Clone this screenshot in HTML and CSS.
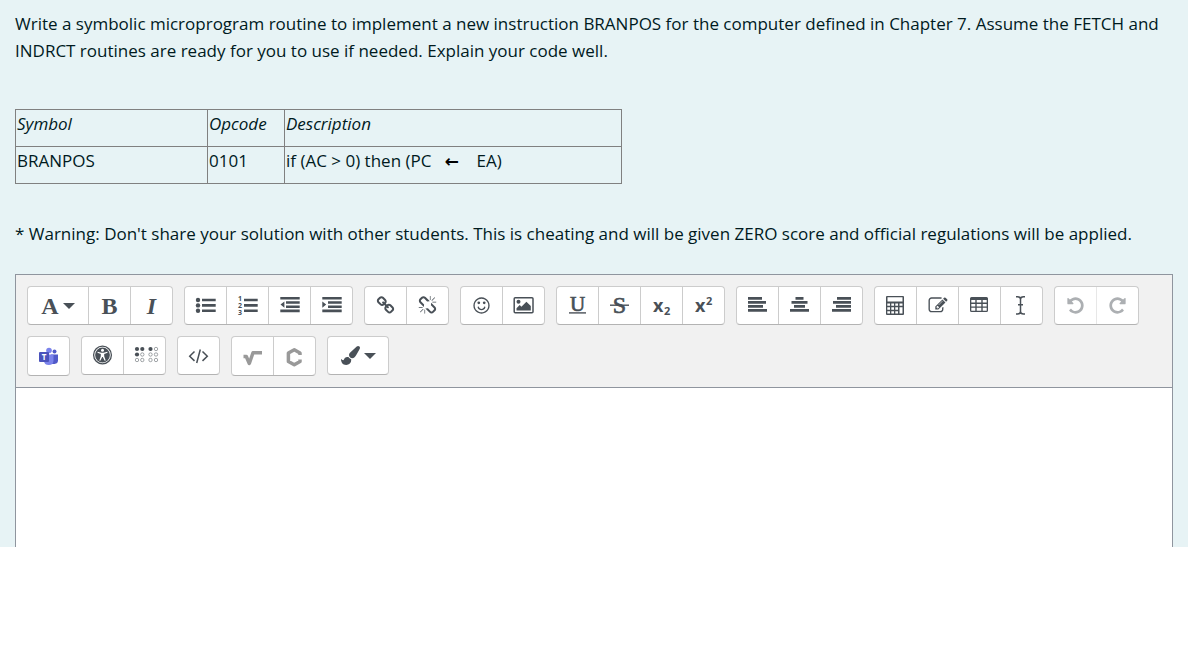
FILE: index.html
```html
<!DOCTYPE html>
<html lang="en">
<head>
    <meta charset="utf-8">
    <meta name="viewport" content="width=device-width, initial-scale=1">
    <title>Question</title>
    <link rel="stylesheet" href="styles.css">
</head>
<body>
<div class="question">
    <p class="question-text">Write a symbolic microprogram routine to implement a new instruction BRANPOS for the computer defined in Chapter 7. Assume the FETCH and INDRCT routines are ready for you to use if needed. Explain your code well.</p>

    <table class="instructions">
        <colgroup>
            <col class="col-symbol">
            <col class="col-opcode">
            <col class="col-description">
        </colgroup>
        <thead>
            <tr>
                <th>Symbol</th>
                <th>Opcode</th>
                <th>Description</th>
            </tr>
        </thead>
        <tbody>
            <tr>
                <td>BRANPOS</td>
                <td>0101</td>
                <td>if (AC &gt; 0) then (PC&nbsp;&nbsp; <span class="arrow">←</span> &nbsp;&nbsp; EA)</td>
            </tr>
        </tbody>
    </table>

    <p class="warning">* Warning: Don't share your solution with other students. This is cheating and will be given ZERO score and official regulations will be applied.</p>

    <div class="editor">
        <div class="toolbar" role="toolbar" aria-label="Editor">
            <div class="group">
                <button type="button" class="wide letter" aria-label="Paragraph styles"><b>A</b><span class="caret"></span></button>
                <button type="button" class="letter" aria-label="Bold"><b>B</b></button>
                <button type="button" class="letter" aria-label="Italic"><b><i>I</i></b></button>
            </div>

            <div class="group">
                <button type="button" aria-label="Unordered list">
                    <svg width="21" height="21" viewBox="0 0 21 21"><circle cx="3" cy="5" r="2.2"/><circle cx="3" cy="10.4" r="2.2"/><circle cx="3" cy="15.8" r="2.2"/><path d="M7 3.700h13.700v2.600H7zM7 9.100h13.700v2.600H7zM7 14.500h13.700v2.600H7z"/></svg>
                </button>
                <button type="button" aria-label="Ordered list">
                    <svg width="21" height="21" viewBox="0 0 21 21"><path d="M7 3.700h13.700v2.600H7zM7 9.100h13.700v2.600H7zM7 14.500h13.700v2.600H7z"/><text class="digit" x="1" y="6">1</text><text class="digit" x="1" y="13">2</text><text class="digit" x="1" y="20">3</text></svg>
                </button>
                <button type="button" aria-label="Outdent">
                    <svg width="21" height="21" viewBox="0 0 21 21"><path d="M1.300 2h19.400v2.600H1.300zM7 6.200h13.700v2.600H7zM7 10.400h13.700V13H7zM1.300 14.600h19.400v2.600H1.300zM5.400 6.400v6.400L1.500 9.600z"/></svg>
                </button>
                <button type="button" aria-label="Indent">
                    <svg width="21" height="21" viewBox="0 0 21 21"><path d="M1.300 2h19.400v2.600H1.300zM7 6.200h13.700v2.600H7zM7 10.400h13.700V13H7zM1.300 14.600h19.400v2.600H1.300zM1.300 6.400v6.400l3.900-3.200z"/></svg>
                </button>
            </div>

            <div class="group">
                <button type="button" aria-label="Link">
                    <svg width="19" height="19" viewBox="0 0 1792 1792"><path d="M1520 1216q0-40-28-68l-208-208q-28-28-68-28-42 0-72 32 3 3 19 18.500t21.500 21.500 15 19 13 25.500 3.500 27.500q0 40-28 68t-68 28q-15 0-27.500-3.500t-25.500-13-19-15-21.500-21.500-18.500-19q-33 31-33 73 0 40 28 68l206 207q27 27 68 27 40 0 68-26l147-146q28-28 28-67zm-703-705q0-40-28-68l-206-207q-28-28-68-28-39 0-68 27l-147 146q-28 28-28 67 0 40 28 68l208 208q27 27 68 27 42 0 72-31-3-3-19-18.500t-21.500-21.500-15-19-13-25.500-3.500-27.500q0-40 28-68t68-28q15 0 27.500 3.500t25.500 13 19 15 21.500 21.500 18.500 19q33-31 33-73zm895 705q0 120-85 203l-147 146q-83 83-203 83-121 0-204-85l-206-207q-83-83-83-203 0-123 88-209l-88-88q-86 88-208 88-120 0-204-84l-208-208q-84-84-84-204t85-203l147-146q83-83 203-83 121 0 204 85l206 207q83 83 83 203 0 123-88 209l88 88q86-88 208-88 120 0 204 84l208 208q84 84 84 204z"/></svg>
                </button>
                <button type="button" aria-label="Unlink">
                    <svg width="19" height="19" viewBox="0 0 1792 1792"><path d="M503 1271l-256 256q-10 9-23 9-12 0-23-9-9-10-9-23t9-23l256-256q10-9 23-9t23 9q9 10 9 23t-9 23zm169 41v320q0 14-9 23t-23 9-23-9-9-23v-320q0-14 9-23t23-9 23 9 9 23zm-224-224q0 14-9 23t-23 9h-320q-14 0-23-9t-9-23 9-23 23-9h320q14 0 23 9t9 23zm1264 128q0 120-85 203l-147 146q-83 83-203 83-121 0-204-85l-334-335q-21-21-42-56l239-18 273 274q28 28 68 27.500t68-27.500l147-146q28-28 28-67 0-40-28-68l-274-275 18-239q35 21 56 42l336 336q84 86 84 204zm-617-724l-239 18-273-274q-28-28-68-28-39 0-68 27l-147 146q-28 28-28 67 0 40 28 68l274 274-18 240q-35-21-56-42l-336-336q-84-86-84-204 0-120 85-203l147-146q83-83 203-83 121 0 204 85l334 335q21 21 42 56zm633 84q0 14-9 23t-23 9h-320q-14 0-23-9t-9-23 9-23 23-9h320q14 0 23 9t9 23zm-544-544v320q0 14-9 23t-23 9-23-9-9-23v-320q0-14 9-23t23-9 23 9 9 23zm407 151l-256 256q-11 9-23 9t-23-9q-9-10-9-23t9-23l256-256q10-9 23-9t23 9q9 10 9 23t-9 23z"/></svg>
                </button>
            </div>

            <div class="group">
                <button type="button" aria-label="Emoji picker">
                    <svg width="19" height="19" viewBox="0 0 1792 1792"><path d="M1262 1075q-37 121-138 195t-228 74-228-74-138-195q-8-25 4-48.500t38-31.500q25-8 48.500 4t31.500 38q25 80 92.500 129.500t151.500 49.500 151.500-49.500 92.500-129.500q8-26 32-38t49-4 37 31.500 4 48.500zm-494-435q0 53-37.500 90.500t-90.500 37.500-90.500-37.500-37.500-90.500 37.500-90.500 90.500-37.500 90.500 37.500 37.500 90.500zm512 0q0 53-37.500 90.500t-90.500 37.500-90.500-37.500-37.500-90.500 37.500-90.500 90.500-37.500 90.500 37.500 37.500 90.500zm256 256q0-130-51-248.500t-136.500-204-204-136.500-248.500-51-248.500 51-204 136.500-136.500 204-51 248.500 51 248.500 136.500 204 204 136.500 248.500 51 248.500-51 204-136.500 136.500-204 51-248.500zm128 0q0 209-103 385.500t-279.500 279.500-385.500 103-385.500-103-279.500-279.500-103-385.500 103-385.500 279.500-279.500 385.500-103 385.500 103 279.500 279.500 103 385.500z"/></svg>
                </button>
                <button type="button" aria-label="Insert image">
                    <svg width="21" height="21" viewBox="0 0 21 21"><rect class="line" x="1.200" y="2.700" width="18.800" height="15" rx="1" stroke-width="1.500"/><circle cx="5.500" cy="6.800" r="2"/><path d="M3.500 15.500v-2.300l3.200-3.100 1.700 1.600 5-5 4.400 4.400v4.400z"/></svg>
                </button>
            </div>

            <div class="group">
                <button type="button" aria-label="Underline">
                    <svg width="21" height="21" viewBox="0 0 21 21"><text class="serif" x="10.500" y="16" font-size="21" text-anchor="middle">U</text><path d="M2 17.200h17v1.400H2z"/></svg>
                </button>
                <button type="button" aria-label="Strike through">
                    <svg width="21" height="21" viewBox="0 0 21 21"><text class="serif" x="10.500" y="18" font-size="24" text-anchor="middle">S</text><path d="M1 9.500h19v1.400H1z"/></svg>
                </button>
                <button type="button" aria-label="Subscript">
                    <svg width="21" height="21" viewBox="0 0 21 21"><text class="script" x="2" y="17" font-size="18">x</text><text class="script" x="13" y="20" font-size="11">2</text></svg>
                </button>
                <button type="button" aria-label="Superscript">
                    <svg width="21" height="21" viewBox="0 0 21 21"><text class="script" x="2" y="17" font-size="18">x</text><text class="script" x="13" y="10" font-size="11">2</text></svg>
                </button>
            </div>

            <div class="group">
                <button type="button" aria-label="Left align">
                    <svg width="21" height="21" viewBox="0 0 21 21"><path d="M1 2h14v2.700H1zM1 6h18v2.700H1zM1 10h15v2.700H1zM1 14h19v2.700H1z"/></svg>
                </button>
                <button type="button" aria-label="Center">
                    <svg width="21" height="21" viewBox="0 0 21 21"><path d="M6.500 2h8v2.700h-8zM2.500 6h16v2.700h-16zM5 10h11v2.700H5zM1 14h19v2.700H1z"/></svg>
                </button>
                <button type="button" aria-label="Right align">
                    <svg width="21" height="21" viewBox="0 0 21 21"><path d="M6 2h14v2.700H6zM2 6h18v2.700H2zM5 10h15v2.700H5zM1 14h19v2.700H1z"/></svg>
                </button>
            </div>

            <div class="group">
                <button type="button" aria-label="Equation editor">
                    <svg width="21" height="21" viewBox="0 0 21 21"><path fill-rule="evenodd" d="M2 1h16q1 0 1 1v17q0 1-1 1H2q-1 0-1-1V2q0-1 1-1zM2.500 2.300v4.200h15V2.300zM2.300 8.500v2.300h2.700V8.500zM6.300 8.500v2.300H9V8.500zM10.300 8.500v2.300H13V8.500zM14.500 8.500v2.300h3V8.500zM2.300 12.300v2.400H5v-2.400zM6.300 12.300v2.400H9v-2.400zM10.300 12.300v2.400H13v-2.400zM14.500 12.300v6.200h3v-6.200zM2.300 16.200v2.300H5v-2.300zM6.300 16.200v2.300H9v-2.300zM10.300 16.200v2.300H13v-2.300z"/></svg>
                </button>
                <button type="button" aria-label="Insert equation">
                    <svg width="20" height="19" viewBox="0 0 1792 1792"><path d="M888 1184l116-116-152-152-116 116v56h96v96h56zm440-720q-16-16-33 1l-350 350q-17 17-1 33t33-1l350-350q17-17 1-33zm80 594v190q0 119-84.500 203.500t-203.500 84.500h-832q-119 0-203.500-84.500t-84.500-203.500v-832q0-119 84.500-203.500t203.500-84.500h832q63 0 117 25 15 7 18 23 3 17-9 29l-49 49q-14 14-32 8-23-6-45-6h-832q-66 0-113 47t-47 113v832q0 66 47 113t113 47h832q66 0 113-47t47-113v-126q0-13 9-22l64-64q15-15 35-7t20 29zm-96-738l288 288-672 672h-288v-288zm444 132l-92 92-288-288 92-92q28-28 68-28t68 28l152 152q28 28 28 68t-28 68z"/></svg>
                </button>
                <button type="button" aria-label="Table">
                    <svg width="21" height="21" viewBox="0 0 21 21"><path fill-rule="evenodd" d="M2.500 2h15q1.500 0 1.500 1.500v12q0 1.500-1.500 1.500h-15Q1 17 1 15.500v-12Q1 2 2.500 2zM2.300 5v2.600h4V5zM7.700 5v2.600h4.600V5zM13.700 5v2.600h4V5zM2.300 8.900v2.600h4V8.900zM7.700 8.900v2.600h4.600V8.900zM13.700 8.900v2.600h4V8.900zM2.300 12.800v2.900h4v-2.900zM7.700 12.800v2.900h4.600v-2.900zM13.700 12.800v2.900h4v-2.900z"/></svg>
                </button>
                <button type="button" aria-label="Clear formatting">
                    <svg width="21" height="21" viewBox="0 0 21 21"><path class="line" stroke-width="1.500" d="M5 1.800h1.500q3 0 3 2.500v12.200q0 2.500-3 2.500H5M14 1.800h-1.500q-3 0-3 2.500v12.200q0 2.500 3 2.500H14M7 9.700h5"/></svg>
                </button>
            </div>

            <div class="group">
                <button type="button" aria-label="Undo" disabled>
                    <svg width="19" height="19" viewBox="0 0 1792 1792"><path d="M1664 896q0 156-61 298t-164 245-245 164-298 61q-172 0-327-72.500t-264-204.500q-7-10-6.500-22.500t8.500-20.500l137-138q10-9 25-9 16 2 23 12 73 95 179 147t225 52q104 0 198.500-40.500t163.500-109.500 109.500-163.500 40.500-198.500-40.500-198.500-109.500-163.500-163.500-109.500-198.500-40.500q-98 0-188 35.500t-160 101.500l137 138q31 30 14 69-17 40-59 40h-448q-26 0-45-19t-19-45v-448q0-42 40-59 39-17 69 14l130 129q107-101 244.500-156.500t284.500-55.500q156 0 298 61t245 164 164 245 61 298z"/></svg>
                </button>
                <button type="button" aria-label="Redo" disabled>
                    <svg width="19" height="19" viewBox="0 0 1792 1792"><path transform="matrix(-1 0 0 1 1792 0)" d="M1664 896q0 156-61 298t-164 245-245 164-298 61q-172 0-327-72.500t-264-204.500q-7-10-6.500-22.500t8.500-20.500l137-138q10-9 25-9 16 2 23 12 73 95 179 147t225 52q104 0 198.500-40.500t163.500-109.500 109.500-163.500 40.500-198.500-40.500-198.500-109.500-163.500-163.500-109.500-198.500-40.500q-98 0-188 35.500t-160 101.500l137 138q31 30 14 69-17 40-59 40h-448q-26 0-45-19t-19-45v-448q0-42 40-59 39-17 69 14l130 129q107-101 244.500-156.500t284.500-55.500q156 0 298 61t245 164 164 245 61 298z"/></svg>
                </button>
            </div>

            <div class="group tall">
                <button type="button" aria-label="Microsoft Teams">
                    <svg width="21" height="21" viewBox="0 -1 21 21"><circle cx="16.500" cy="4.500" r="2" fill="#5059c9"/><path d="M13 7.500h7v6q0 3-3.500 3.500H13z" fill="#5059c9"/><circle cx="11" cy="3.500" r="2.800" fill="#7b83eb"/><path d="M6 7.500h9.500v6q0 4.500-4.700 4.500T6 13.500z" fill="#7b83eb"/><rect x="1" y="5" width="10" height="10" rx="1" fill="#4b53bc"/><text class="teams" x="6" y="13" text-anchor="middle">T</text></svg>
                </button>
            </div>

            <div class="group">
                <button type="button" aria-label="Accessibility checker">
                    <svg width="21" height="21" viewBox="0 0 21 21"><circle class="line" cx="10.500" cy="10" r="8.900" stroke-width="1.300"/><circle cx="10.500" cy="10" r="7.400"/><g fill="#fff"><circle cx="10.500" cy="5.200" r="1.500"/><path d="M5.700 6.700l3.600 1h2.400l3.600-1 .3 1-3.400 1.200v2.400l1.500 4.100-1 .4-1.900-3.700h-.6l-1.900 3.700-1-.4 1.500-4.100V8.900L5.400 7.700z"/></g></svg>
                </button>
                <button type="button" aria-label="Screenreader helper">
                    <svg width="25" height="21" viewBox="-2 0 25 21"><circle cx="3" cy="4" r="2.100"/><circle cx="8.300" cy="4" r="2.100"/><circle cx="3" cy="9.500" r="2.100"/><circle cx="16.500" cy="4" r="2.100"/><g class="line" stroke-width=".5"><circle cx="8.300" cy="9.500" r="1.700"/><circle cx="3" cy="15" r="1.700"/><circle cx="8.300" cy="15" r="1.700"/><circle cx="22" cy="4" r="1.700"/><circle cx="16.500" cy="9.500" r="1.700"/><circle cx="22" cy="9.500" r="1.700"/><circle cx="16.500" cy="15" r="1.700"/><circle cx="22" cy="15" r="1.700"/></g></svg>
                </button>
            </div>

            <div class="group">
                <button type="button" aria-label="HTML">
                    <svg width="21" height="21" viewBox="-1 -1 21 21"><path class="line" stroke-width="1.500" d="M5.500 5.500L.7 10.200l4.800 4.700M13.500 5.500l4.800 4.700-4.800 4.700M11.300 3.500L7.700 17"/></svg>
                </button>
            </div>

            <div class="group tall">
                <button type="button" aria-label="MathType">
                    <svg width="21" height="21" viewBox="0 -1 21 21"><path class="math" stroke-width="3.500" d="M1.500 9.500h2.800l3 7L11 5.800h9"/></svg>
                </button>
                <button type="button" aria-label="ChemType">
                    <svg width="21" height="21" viewBox="1 -1 21 21"><path class="math" stroke-width="3.500" d="M17 8V6l-5.700-3.200L5.400 6v8.500l5.900 3.200 5.700-3.200v-2"/></svg>
                </button>
            </div>

            <div class="group">
                <button type="button" class="wide" aria-label="Font colour">
                    <svg width="19" height="19" viewBox="0 0 1792 1792"><path d="M1615 0q70 0 122.500 46.500t52.500 116.500q0 63-45 151-332 629-465 752-97 91-218 91-126 0-216.500-92.500t-90.500-219.500q0-128 92-212l638-579q59-54 130-54zm-909 1034q39 76 106.500 130t150.500 76l1 71q4 213-129.500 347t-348.500 134q-123 0-218-46.500t-152.500-127.500-86.500-183-29-220q7 5 41 30t62 44.500 59 36.500 46 17q41 0 55-37 25-66 57.500-112.500t69.500-76 88-47.500 103-25.500 125-10.500z"/></svg>
                    <span class="caret"></span>
                </button>
            </div>
        </div>
        <textarea class="answer" aria-label="Answer text"></textarea>
    </div>
</div>
</body>
</html>
```
FILE: styles.css
```css
* {
    box-sizing: border-box;
}

body {
    margin: 0;
    background: #fff;
    color: #001a1e;
    font-family: "Open Sans", sans-serif;
    font-size: 17px;
    line-height: 27px;
}

.question {
    background: #e7f3f5;
    padding: 10px 15px 0;
}

.question-text {
    margin: 0 0 45px;
}

.instructions {
    width: 607px;
    max-width: 100%;
    table-layout: fixed;
    border-collapse: collapse;
}

.col-symbol {
    width: 192px;
}

.col-opcode {
    width: 77px;
}

.instructions th,
.instructions td {
    height: 37px;
    padding: 0 1px;
    border: 1px solid #808080;
    text-align: left;
    vertical-align: top;
}

.instructions th {
    font-weight: normal;
    font-style: italic;
}

.arrow {
    color: #000;
    font-family: "DejaVu Sans", sans-serif;
    font-weight: bold;
    line-height: 1;
}

.warning {
    margin: 36px 0 27px;
}

.editor {
    border: 1px solid #8f959e;
    border-bottom: 0;
}

.toolbar {
    display: flex;
    flex-wrap: wrap;
    align-items: flex-start;
    gap: 11px;
    padding: 11px;
    background: #f1f1f1;
    border-bottom: 1px solid #8f959e;
}

.group {
    display: flex;
    height: 39px;
    background: #fff;
    border: 1px solid #ccc;
    border-bottom-color: #b3b3b3;
    border-radius: 4px;
}

.group.tall {
    height: 40px;
}

.group button {
    display: flex;
    align-items: center;
    justify-content: center;
    width: 41px;
    padding: 0;
    border: 0;
    background: none;
    color: #495057;
}

.group button + button {
    width: 42px;
    border-left: 1px solid #ccc;
}

.group .wide {
    width: 60px;
    gap: 4px;
}

.group button:disabled {
    opacity: 0.45;
}

.letter {
    font-family: "Liberation Serif", serif;
    font-size: 24px;
    line-height: 24px;
}

.caret {
    border: 6px solid transparent;
    border-top-color: currentColor;
    border-bottom: 0;
}

svg {
    display: block;
    overflow: visible;
    fill: currentColor;
}

.line,
.math {
    fill: none;
    stroke: currentColor;
}

.math {
    stroke: #999;
    stroke-linejoin: round;
}

.digit {
    font: bold 7px "Open Sans", sans-serif;
}

.serif {
    font-family: "Liberation Serif", serif;
    stroke: currentColor;
    stroke-width: 0.7;
}

.script {
    font-family: "Open Sans", sans-serif;
    font-weight: bold;
}

.teams {
    fill: #fff;
    font: bold 8px "Open Sans", sans-serif;
}

.answer {
    display: block;
    width: 100%;
    height: 159px;
    padding: 10px;
    border: 0;
    outline: 0;
    resize: none;
    background: #fff;
    font: inherit;
}
```
